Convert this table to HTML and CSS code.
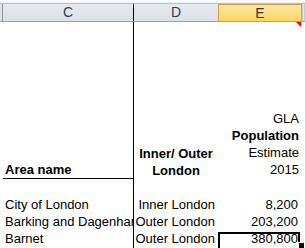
FILE: index.html
```html
<!DOCTYPE html>
<html>
<head>
<meta charset="utf-8">
<link rel="stylesheet" href="styles.css">
</head>
<body>
<div class="sheet">
  <div class="topbar"></div>
  <div class="heads">
    <div class="corner"></div>
    <div class="h hc">C</div>
    <div class="h hd">D</div>
    <div class="h he">E</div>
    <div class="h hf"></div>
  </div>
  <div class="grid">
    <div class="stub"></div>
    <div class="cell c title">Area name</div>
    <div class="cell d title"><b>Inner/ Outer<br>London</b></div>
    <div class="cell e title"><span>GLA<br><b>Population</b><br>Estimate<br>2015</span><i class="comment"></i></div>
    <div class="stub"></div>

    <div class="stub"></div>
    <div class="cell c"></div>
    <div class="cell d"></div>
    <div class="cell e"></div>
    <div class="stub"></div>

    <div class="stub"></div>
    <div class="cell c">City of London</div>
    <div class="cell d">Inner London</div>
    <div class="cell e">8,200</div>
    <div class="stub"></div>

    <div class="stub"></div>
    <div class="cell c">Barking and Dagenham</div>
    <div class="cell d">Outer London</div>
    <div class="cell e">203,200</div>
    <div class="stub"></div>

    <div class="stub"></div>
    <div class="cell c">Barnet</div>
    <div class="cell d">Outer London</div>
    <div class="cell e active">380,800<i class="selbox"></i><i class="handle"></i></div>
    <div class="stub"></div>
  </div>
</div>
</body>
</html>
```
FILE: styles.css
```css
html, body {
  margin: 0;
  padding: 0;
  background: #ffffff;
}
.sheet {
  width: 305px;
  height: 248px;
  overflow: hidden;
  font-family: "Liberation Sans", Arial, sans-serif;
  font-size: 13px;
  color: #000;
}
.topbar {
  height: 4px;
  box-sizing: border-box;
  background: #eef1f5;
  border-top: 2px solid #fbfcfd;
  border-bottom: 1px solid #b8c0cb;
}
.heads {
  display: flex;
  height: 18px;
}
.h {
  box-sizing: border-box;
  height: 18px;
  background: linear-gradient(#e6e9ed, #dde1e6);
  border-bottom: 1px solid #9da3ab;
  border-right: 1px solid #c9cdd3;
  color: #2c3e55;
  font-size: 14px;
  line-height: 17px;
  text-align: center;
}
.corner {
  width: 3px;
  box-sizing: border-box;
  height: 18px;
  background: #dfe3e8;
  border-right: 1px solid #8c9198;
  border-bottom: 1px solid #9da3ab;
}
.hc {
  width: 131px;
  border-right: 1px solid #000;
}
.hd {
  width: 84px;
  border-right: none;
}
.he {
  width: 84px;
  background: linear-gradient(#fbe9a6, #ffd65e);
  border: 1px solid #d99b3e;
  color: #333;
}
.hf {
  flex: 1;
  border-left: 1px solid #c9cdd3;
}
.grid {
  display: grid;
  grid-template-columns: 3px 131px 84px 84px 3px;
  grid-template-rows: 157px 18px 17px 17px 17px;
}
.cell {
  box-sizing: border-box;
  line-height: 16px;
  white-space: nowrap;
  overflow: hidden;
  position: relative;
}
.c {
  border-right: 1px solid #000;
  padding-left: 2px;
}
.d {
  text-align: right;
  padding-right: 3px;
}
.e {
  text-align: right;
  padding-right: 4px;
  overflow: visible;
}
.title {
  display: flex;
  flex-direction: column;
  justify-content: flex-end;
  line-height: 17px;
}
.c.title {
  border-bottom: 1px solid #000;
  font-weight: bold;
}
.d.title {
  text-align: center;
  padding-right: 0;
}
.e.title {
  padding-right: 3px;
  padding-bottom: 1px;
}
.comment {
  position: absolute;
  top: 0;
  right: 1px;
  width: 0;
  height: 0;
  border-top: 5px solid #ff0000;
  border-left: 5px solid transparent;
}
.selbox {
  position: absolute;
  left: 0;
  top: 1px;
  width: 82px;
  height: 18px;
  box-sizing: border-box;
  border: 2px solid #000;
}
.handle {
  position: absolute;
  left: 80px;
  top: 11px;
  width: 5px;
  height: 6px;
  background: #000;
  border-left: 1px solid #fff;
  border-top: 1px solid #fff;
}
```
